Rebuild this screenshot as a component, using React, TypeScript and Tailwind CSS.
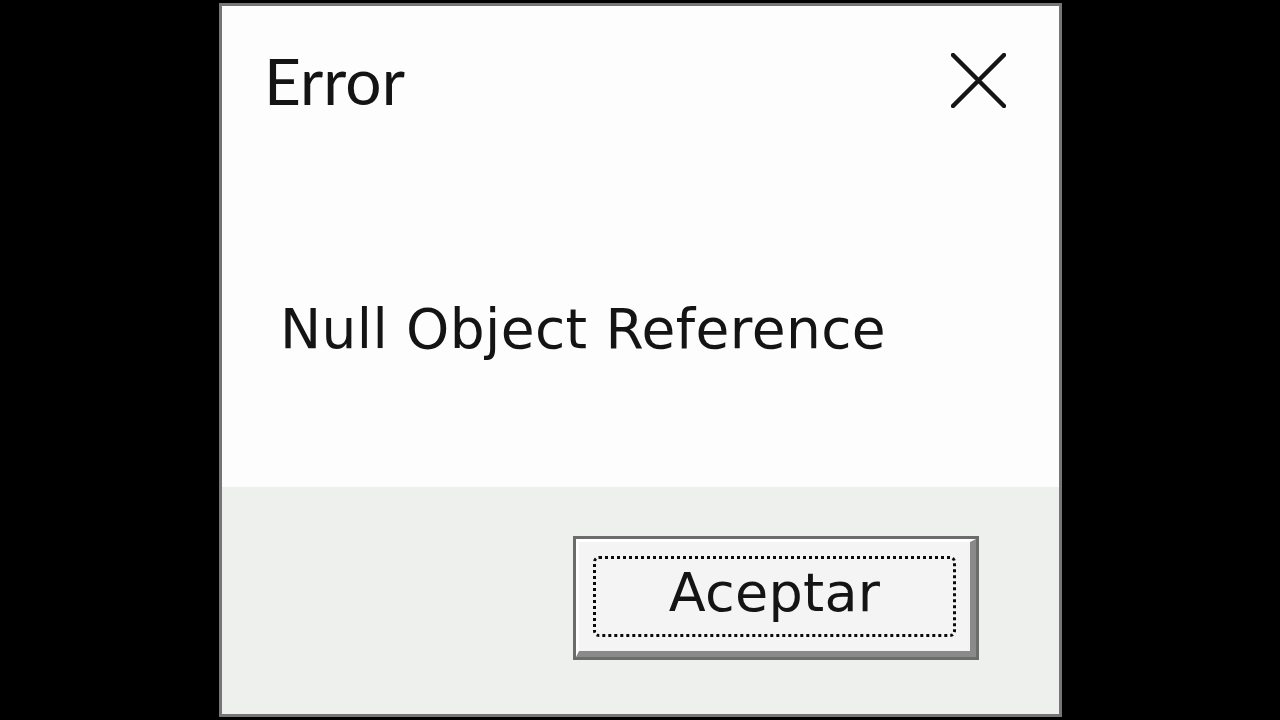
export default function App() {
  return (
    <div className="flex h-[720px] w-[1280px] bg-black pl-[219px] pt-[3px] font-['Lato','Noto_Sans',sans-serif] text-[#141414]">
      <div className="flex h-[714px] w-[843px] flex-col border-[3px] border-[#767676] bg-[#fcfdfc]">
        {/* cuerpo */}
        <div className="h-[481px]">
          <div className="flex items-start justify-between pl-[42px] pr-[53px] pt-[43px]">
            <span className="text-[64px] leading-none">Error</span>
            <svg className="mt-[4px] h-[55px] w-[55px]" viewBox="0 0 55 55">
              <path d="M2 2 L53 53 M53 2 L2 53" stroke="#151515" strokeWidth="4.5" strokeLinecap="round" />
            </svg>
          </div>
          <p className="mt-[189px] pl-[58px] font-['DejaVu_Sans',sans-serif] text-[55px] leading-none tracking-[0.4px]">
            Null Object Reference
          </p>
        </div>

        {/* pie */}
        <div className="flex flex-1 justify-end bg-[#eef0ed] pr-[80px] pt-[49px]">
          <button
            type="button"
            className="h-[124px] w-[406px] border-[3px] border-[#6c6c6c] bg-[#f3f4f3]"
          >
            <div className="h-full w-full border-b-[6px] border-l-[3px] border-r-[6px] border-t-[3px] border-b-[#8a8a8a] border-l-white border-r-[#8a8a8a] border-t-white p-[14px]">
              <div className="flex h-full w-full items-center justify-center rounded-[6px] border-[3px] border-dotted border-[#0a0a0a] pb-[8px] font-['DejaVu_Sans',sans-serif] text-[54px] leading-none tracking-[0.3px]">
                Aceptar
              </div>
            </div>
          </button>
        </div>
      </div>
    </div>
  );
}
